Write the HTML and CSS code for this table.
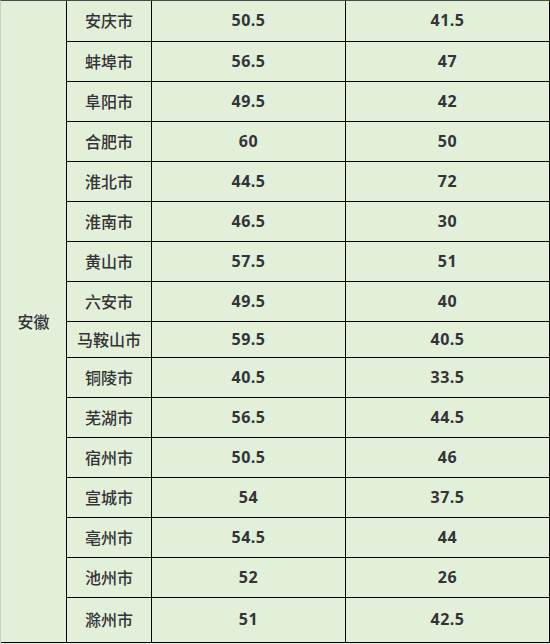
FILE: index.html
```
<!DOCTYPE html>
<html lang="zh">
<head>
<meta charset="utf-8">
<link rel="stylesheet" href="styles.css">
</head>
<body>
<table class="grid">
  <colgroup>
    <col class="c1"><col class="c2"><col class="c3"><col class="c4">
  </colgroup>
  <tbody>
    <tr class="r41"><td class="prov" rowspan="16">安徽</td><td class="city">安庆市</td><td class="num">50.5</td><td class="num">41.5</td></tr>
    <tr><td class="city">蚌埠市</td><td class="num">56.5</td><td class="num">47</td></tr>
    <tr><td class="city">阜阳市</td><td class="num">49.5</td><td class="num">42</td></tr>
    <tr><td class="city">合肥市</td><td class="num">60</td><td class="num">50</td></tr>
    <tr><td class="city">淮北市</td><td class="num">44.5</td><td class="num">72</td></tr>
    <tr><td class="city">淮南市</td><td class="num">46.5</td><td class="num">30</td></tr>
    <tr><td class="city">黄山市</td><td class="num">57.5</td><td class="num">51</td></tr>
    <tr><td class="city">六安市</td><td class="num">49.5</td><td class="num">40</td></tr>
    <tr class="r36"><td class="city">马鞍山市</td><td class="num">59.5</td><td class="num">40.5</td></tr>
    <tr><td class="city">铜陵市</td><td class="num">40.5</td><td class="num">33.5</td></tr>
    <tr><td class="city">芜湖市</td><td class="num">56.5</td><td class="num">44.5</td></tr>
    <tr><td class="city">宿州市</td><td class="num">50.5</td><td class="num">46</td></tr>
    <tr><td class="city">宣城市</td><td class="num">54</td><td class="num">37.5</td></tr>
    <tr><td class="city">亳州市</td><td class="num">54.5</td><td class="num">44</td></tr>
    <tr><td class="city">池州市</td><td class="num">52</td><td class="num">26</td></tr>
    <tr class="r45"><td class="city">滁州市</td><td class="num">51</td><td class="num">42.5</td></tr>
  </tbody>
</table>
</body>
</html>
```
FILE: styles.css
```
html, body {
  margin: 0;
  padding: 0;
  background: #e3f0d9;
}
.grid {
  width: 550px;
  table-layout: fixed;
  border-collapse: separate;
  border-spacing: 0;
  border-top: 1px solid #4a4a4a;
  border-left: 1px solid #c9cfc4;
  box-sizing: border-box;
  color: #333338;
  font-size: 16px;
}
.c1 { width: 66px; }
.c2 { width: 85px; }
.c3 { width: 194px; }
.c4 { width: 204px; }
.grid td {
  box-sizing: border-box;
  height: 40px;
  padding: 0 0 2px 0;
  text-align: center;
  vertical-align: middle;
  border-right: 1px solid #000;
  border-bottom: 1px solid #000;
  line-height: 20px;
}
.grid tr.r41 td { height: 41px; }
.grid tr.r36 td { height: 36px; }
.grid tr.r45 td { height: 45px; }
.grid td.prov { height: auto; }
.prov, .city {
  font-family: "Noto Sans CJK SC", "Noto Sans", sans-serif;
  font-weight: 500;
}
.num {
  font-family: "Open Sans", "Noto Sans", sans-serif;
  font-weight: 700;
  letter-spacing: 0.5px;
}
```
